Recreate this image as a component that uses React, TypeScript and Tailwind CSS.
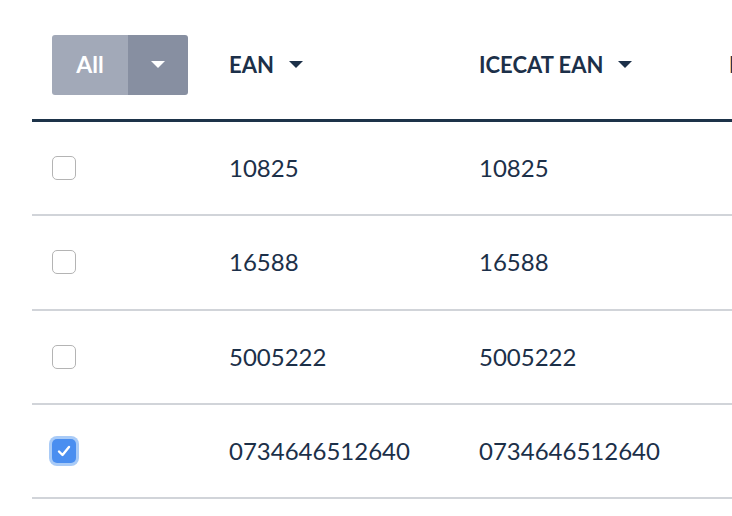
import React from "react";

const rows = [
  { ean: "10825", ice: "10825", checked: false },
  { ean: "16588", ice: "16588", checked: false },
  { ean: "5005222", ice: "5005222", checked: false },
  { ean: "0734646512640", ice: "0734646512640", checked: true },
];

function Caret({ color }: { color: string }) {
  return (
    <svg width="14" height="7" viewBox="0 0 14 7" className="shrink-0">
      <path d="M0 0 L14 0 L7 7 Z" fill={color} />
    </svg>
  );
}

function Checkbox({ checked }: { checked: boolean }) {
  if (checked) {
    return (
      <div className="w-[24px] h-[24px] rounded-[5px] bg-[#4a8ef0] ring-[3px] ring-[#a9cbf7] flex items-center justify-center">
        <svg width="16" height="14" viewBox="0 0 16 14">
          <path d="M3 7.5 L6.5 11 L13 3" fill="none" stroke="white" strokeWidth="2.4" strokeLinecap="round" strokeLinejoin="round" />
        </svg>
      </div>
    );
  }
  return <div className="w-[24px] h-[24px] rounded-[5px] border-[1.5px] border-[#b4b4b4] bg-white" />;
}

export default function App() {
  return (
    <div className="w-[732px] h-[516px] overflow-hidden bg-white text-[#1c3049]" style={{ fontFamily: "Lato, 'Open Sans', sans-serif" }}>
      <div className="ml-[32px] w-[800px]">
        <div className="grid grid-cols-[177px_250px_250px_1fr] items-center h-[122px] border-b-[3px] border-[#1d3349] pt-[10px]">
          <div className="pl-[20px]">
            <div className="flex h-[60px] w-[136px] rounded-[3px] overflow-hidden">
              <div className="w-[76px] bg-[#a2a9b8] flex items-center justify-center text-white font-bold text-[23px]">All</div>
              <div className="flex-1 bg-[#878fa1] flex items-center justify-center">
                <Caret color="#ffffff" />
              </div>
            </div>
          </div>
          <div className="pl-[20px] flex items-center gap-[15px] font-bold text-[22px]">
            <span>EAN</span>
            <Caret color="#1c3049" />
          </div>
          <div className="pl-[20px] flex items-center gap-[15px] font-bold text-[22px]">
            <span>ICECAT EAN</span>
            <Caret color="#1c3049" />
          </div>
          <div className="pl-[20px] font-bold text-[22px]">IMAGE</div>
        </div>
        {rows.map((r, i) => (
          <div key={i} className="grid grid-cols-[177px_250px_250px_1fr] items-center h-[94.3px] border-b-2 border-[#d1d4d9]">
            <div className="pl-[20px]">
              <Checkbox checked={r.checked} />
            </div>
            <div className="pl-[20px] text-[24px]">{r.ean}</div>
            <div className="pl-[20px] text-[24px]">{r.ice}</div>
            <div />
          </div>
        ))}
      </div>
    </div>
  );
}
